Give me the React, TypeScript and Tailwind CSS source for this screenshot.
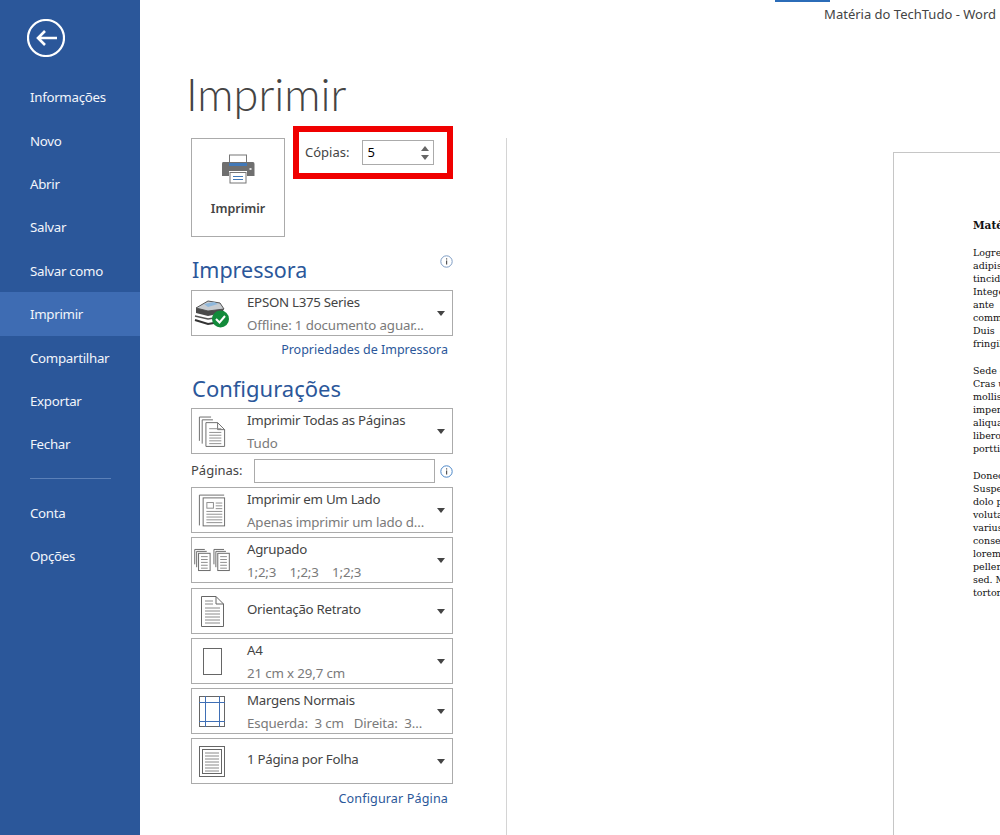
import React from "react";

const nav1 = ["Informações", "Novo", "Abrir", "Salvar", "Salvar como", "Imprimir", "Compartilhar", "Exportar", "Fechar"];
const nav2 = ["Conta", "Opções"];

const docBlocks = [
  ["Logre", "adipis", "tincid", "Intege", "ante", "comm", "Duis", "fringil"],
  ["Sede e", "Cras u", "mollis", "imper", "aliqua", "libero", "portti"],
  ["Donec", "Suspe", "dolo p", "voluta", "varius", "conse", "lorem", "peller", "sed. M", "tortor"],
];

const S = "#666666";

function Lines({ x1, x2, ys, c = "#8a8a8a" }: { x1: number; x2: number; ys: number[]; c?: string }) {
  return (
    <>
      {ys.map((y) => (
        <line key={y} x1={x1} x2={x2} y1={y} y2={y} stroke={c} strokeWidth="1" />
      ))}
    </>
  );
}

function IconPrinterStatus() {
  return (
    <svg width="36" height="30" viewBox="0 0 36 30">
      <path d="M2 10 L14 3 L26 5 L30 11 L14 13 Z" fill="#c8ccd0" stroke="#555" strokeWidth="1" />
      <path d="M10 6 L20 4 L24 6 L14 9 Z" fill="#8fb8dc" />
      <path d="M2 10 L2 15 L14 18 L28 15 L30 11 L14 13 Z" fill="#4a4a4a" />
      <path d="M1 18 L14 21 L20 20" fill="none" stroke="#555" strokeWidth="1.5" />
      <path d="M1 22 L14 26 L20 25" fill="none" stroke="#333" strokeWidth="2" />
      <circle cx="26.5" cy="21" r="8.5" fill="#128a3a" />
      <path d="M22 21 L25.5 24.5 L31 18" fill="none" stroke="#fff" strokeWidth="2" />
    </svg>
  );
}
function IconAll() {
  return (
    <svg width="28" height="33" viewBox="0 0 30 34">
      <path d="M1.5 27 V1.5 H14" fill="none" stroke={S} />
      <path d="M4.5 30 V4.5 H16" fill="none" stroke={S} />
      <path d="M8.5 33 V7.5 H21 L28.5 15 V33 Z" fill="#fff" stroke={S} />
      <path d="M21 7.5 V15 H28.5" fill="none" stroke={S} />
      <Lines x1={12} x2={25} ys={[14, 18, 21, 24, 27, 30]} />
    </svg>
  );
}
function IconOneSide() {
  return (
    <svg width="28" height="35" viewBox="0 0 30 36">
      <path d="M1.5 34 V1.5" stroke={S} fill="none" />
      <path d="M1.5 1.5 H28" stroke={S} fill="none" />
      <rect x="5.5" y="4.5" width="23" height="30" fill="#fff" stroke={S} />
      <rect x="9.5" y="9.5" width="7" height="6" fill="#fff" stroke="#888" />
      <Lines x1={19} x2={26} ys={[10, 13, 16]} />
      <Lines x1={9} x2={26} ys={[19, 22, 25, 28, 31]} />
    </svg>
  );
}
function Collated({ x }: { x: number }) {
  return (
    <g transform={`translate(${x} 0)`}>
      <path d="M0.5 17 V1.5 H11" fill="none" stroke={S} />
      <path d="M2.5 20 V3.5 H13" fill="none" stroke={S} />
      <rect x="4.5" y="5.5" width="12" height="18" fill="#fff" stroke={S} />
      <Lines x1={7} x2={14} ys={[9, 12, 15, 18, 21]} />
    </g>
  );
}
function IconCollated() {
  return (
    <svg width="37" height="24" viewBox="0 0 38 25">
      <Collated x={0} />
      <Collated x={20} />
    </svg>
  );
}
function IconPortrait() {
  return (
    <svg width="25" height="33" viewBox="0 0 25 33">
      <path d="M1.5 1.5 H16 L23.5 9 V31.5 H1.5 Z" fill="#fff" stroke={S} />
      <path d="M16 1.5 V9 H23.5" fill="none" stroke={S} />
      <Lines x1={5} x2={13} ys={[6, 9]} />
      <Lines x1={5} x2={20} ys={[13, 16, 19, 22, 25, 28]} />
    </svg>
  );
}
function IconA4() {
  return (
    <svg width="21" height="29" viewBox="0 0 21 29">
      <rect x="1.5" y="1.5" width="18" height="26" fill="#fff" stroke={S} />
    </svg>
  );
}
function IconMargins() {
  return (
    <svg width="28" height="33" viewBox="0 0 28 33">
      <rect x="1.5" y="1.5" width="25" height="30" fill="#fff" stroke={S} />
      <path d="M1 7.5 H27 M1 26.5 H27 M7.5 1 V32 M21.5 1 V32" stroke="#3f6fb5" fill="none" />
    </svg>
  );
}
function IconPerSheet() {
  return (
    <svg width="28" height="33" viewBox="0 0 28 33">
      <rect x="1.5" y="1.5" width="25" height="30" fill="#fff" stroke={S} />
      <rect x="4.5" y="4.5" width="19" height="24" fill="#fff" stroke={S} />
      <Lines x1={7} x2={21} ys={[8, 11, 14, 17, 20, 23, 26]} />
    </svg>
  );
}
function Info({ c = "#7d9cc4" }: { c?: string }) {
  return (
    <svg width="13" height="13" viewBox="0 0 13 13">
      <circle cx="6.5" cy="6.5" r="5.7" fill="none" stroke={c} strokeWidth="1" />
      <rect x="6" y="5.5" width="1.2" height="4" fill="#555" />
      <rect x="6" y="3.3" width="1.2" height="1.2" fill="#555" />
    </svg>
  );
}
function Caret() {
  return <div className="h-0 w-0 border-x-[4.5px] border-t-[5px] border-x-transparent border-t-[#444]" />;
}

function Row({
  icon,
  title,
  sub,
  className = "",
}: {
  icon: React.ReactNode;
  title: string;
  sub?: string;
  className?: string;
}) {
  return (
    <div className={`flex h-[46px] items-center border border-[#ababab] bg-white ${className}`}>
      <div className="flex w-[55px] shrink-0 justify-center pr-[15px]">{icon}</div>
      <div
        className={`flex min-w-0 flex-1 flex-col justify-center text-[13.3px] leading-[22px] ${
          sub ? "pt-[1px]" : "pb-[4px]"
        }`}
      >
        <div className={`whitespace-nowrap tracking-[-0.28px] text-[#444] ${sub ? "mb-[1px]" : ""}`}>{title}</div>
        {sub && <div className="whitespace-pre tracking-[-0.14px] text-[#7a7a7a]">{sub}</div>}
      </div>
      <div className="w-[15px] shrink-0">
        <Caret />
      </div>
    </div>
  );
}

export default function App() {
  return (
    <div className="flex h-[835px] w-[1000px] overflow-hidden bg-white font-['Noto_Sans','Open_Sans',sans-serif]">
      {/* Sidebar */}
      <aside className="flex w-[140px] shrink-0 flex-col bg-[#2b579a] text-[13.3px] tracking-[-0.3px] text-[#f2f5fa]">
        <div className="pl-[27px] pt-[19px]">
          <svg width="38" height="38" viewBox="0 0 38 38">
            <circle cx="19" cy="19" r="18" fill="none" stroke="#fff" strokeWidth="2.2" />
            <path d="M30 19 H11 M18 12 L11 19 L18 26" fill="none" stroke="#fff" strokeWidth="2.6" />
          </svg>
        </div>
        <nav className="mt-[18.5px] flex flex-col">
          {nav1.map((n) => (
            <div
              key={n}
              className={`flex h-[43.4px] items-center pl-[30px] pt-[2px] ${n === "Imprimir" ? "bg-[#3e6cb3]" : ""}`}
            >
              {n}
            </div>
          ))}
        </nav>
        <div className="ml-[30px] mt-[11.5px] h-px w-[81px] bg-[#5b80b8]" />
        <nav className="mt-[12.5px] flex flex-col">
          {nav2.map((n) => (
            <div key={n} className="flex h-[43.4px] items-center pl-[30px] pt-[2px]">
              {n}
            </div>
          ))}
        </nav>
      </aside>

      {/* Main */}
      <main className="relative min-w-0 flex-1 overflow-hidden">
        <div className="absolute left-[635px] top-0 h-[2px] w-[55px] bg-[#2b6cb8]" />
        <div className="absolute right-[4px] top-[4px] whitespace-nowrap text-[13px] leading-[20px] text-[#444]">
          Matéria do TechTudo - Word
        </div>

        <h1 className="ml-[46px] mt-[62px] h-[64px] font-['Lato',sans-serif] text-[45px] font-light leading-[64px] text-[#444]">
          Imprimir
        </h1>

        <div className="flex">
          {/* Settings column */}
          <section className="ml-[51px] w-[262px] shrink-0">
            <div className="flex items-start">
              <button className="mt-[12px] flex h-[99px] w-[94px] flex-col items-center border border-[#ababab] pt-[15px] text-[12.5px] font-semibold text-[#444]">
                <svg width="34" height="30" viewBox="0 0 34 30">
                  <rect x="8.5" y="1" width="17" height="9" fill="#fff" stroke="#777" />
                  <path d="M2 8 H32 Q33.5 8 33.5 10 V22 H26 V17 H8 V22 H1 V10 Q1 8 2 8 Z" fill="#6f6f6f" />
                  <rect x="8" y="9" width="18" height="3" fill="#4279b8" />
                  <rect x="9" y="18.5" width="16" height="10.5" fill="#fff" stroke="#777" />
                  <path d="M12 22.5 H22 M12 25.5 H22" stroke="#4279b8" />
                  <rect x="28.5" y="14" width="2" height="2" fill="#ddd" />
                </svg>
                <span className="mt-[16px]">Imprimir</span>
              </button>
              <div className="ml-[8px] flex h-[53px] w-[160px] items-center border-[6px] border-[#f00000] pl-[6px] text-[13px] text-[#444]">
                <span>Cópias:</span>
                <div className="ml-[13px] flex h-[25px] w-[72px] items-center justify-between border border-[#ababab] pl-[4px] pr-[3px] text-black">
                  <span>5</span>
                  <div className="flex flex-col gap-[4px] pr-[1px]">
                    <div className="h-0 w-0 border-x-[4px] border-b-[5px] border-x-transparent border-b-[#666]" />
                    <div className="h-0 w-0 border-x-[4px] border-t-[5px] border-x-transparent border-t-[#666]" />
                  </div>
                </div>
              </div>
            </div>

            <div className="mt-[18px] flex h-[35px] items-start justify-between">
              <h2 className="ml-[1px] text-[21.5px] leading-[30px] text-[#2b579a]">Impressora</h2>
              <div>
                <Info />
              </div>
            </div>
            <Row icon={<IconPrinterStatus />} title="EPSON L375 Series" sub="Offline: 1 documento aguar..." />
            <div className="h-[28px] pr-[5px] text-right text-[12.5px] leading-[28px] text-[#2b579a]">
              Propriedades de Impressora
            </div>
            <h2 className="ml-[1px] mt-[9px] h-[35px] text-[22px] leading-[30px] text-[#2b579a]">Configurações</h2>

            <Row icon={<IconAll />} title="Imprimir Todas as Páginas" sub="Tudo" />
            <div className="mt-[5px] flex h-[24px] items-center text-[13px] text-[#444]">
              <span className="w-[63px]">Páginas:</span>
              <div className="h-[24px] w-[181px] border border-[#ababab]" />
              <div className="ml-[5px]">
                <Info c="#4a86c8" />
              </div>
            </div>
            <Row className="mt-[4px]" icon={<IconOneSide />} title="Imprimir em Um Lado" sub="Apenas imprimir um lado d..." />
            <Row className="mt-[4px]" icon={<IconCollated />} title="Agrupado" sub={"1;2;3    1;2;3    1;2;3"} />
            <Row className="mt-[5px]" icon={<IconPortrait />} title="Orientação Retrato" />
            <Row className="mt-[4px]" icon={<IconA4 />} title="A4" sub="21 cm x 29,7 cm" />
            <Row className="mt-[4px]" icon={<IconMargins />} title="Margens Normais" sub={"Esquerda:  3 cm   Direita:  3..."} />
            <Row className="mt-[4px]" icon={<IconPerSheet />} title="1 Página por Folha" />
            <div className="h-[29px] pr-[5px] text-right text-[12.6px] leading-[29px] tracking-[0.12px] text-[#2b579a]">
              Configurar Página
            </div>
          </section>

          {/* Preview area */}
          <section className="ml-[53px] mt-[12px] flex min-h-[720px] min-w-0 flex-1 border-l border-[#d4d4d4] pt-[14px]">
            <div className="ml-[386px] flex-1 overflow-hidden border-l border-t border-[#c6c6c6] pl-[79px] pt-[66px] font-['DejaVu_Serif','Liberation_Serif',serif] text-[9.5px] leading-[13px] text-[#111]">
              <div className="mb-[14px] whitespace-nowrap text-[10.5px] font-bold">Matéria</div>
              {docBlocks.map((b, i) => (
                <div key={i} className="mb-[14px]">
                  {b.map((l) => (
                    <div key={l} className="whitespace-nowrap">
                      {l}
                    </div>
                  ))}
                </div>
              ))}
            </div>
          </section>
        </div>
      </main>
    </div>
  );
}
